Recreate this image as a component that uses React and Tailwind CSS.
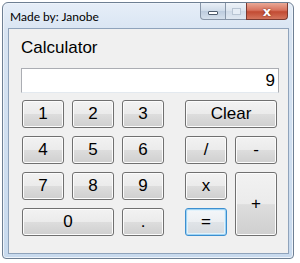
import React from "react";

const btn =
  "flex items-center justify-center rounded-[3px] border border-[#707070] bg-[linear-gradient(#f2f2f2_0%,#ebebeb_50%,#dddddd_51%,#cfcfcf_100%)] text-[17px] text-black shadow-[inset_0_0_0_1px_#fcfcfc]";

function Btn({ children, className = "" }) {
  return <div className={`${btn} ${className}`}>{children}</div>;
}

export default function App() {
  return (
    <div className="w-[300px] h-[263px] bg-white pt-[2px] pl-[2px] font-['Liberation_Sans',Arial,sans-serif]">
      <div className="w-[292px] h-[257px] rounded-t-[6px] rounded-b-[4px] border border-[#6e7f93] bg-[linear-gradient(#e6eef8,#d8e4f2_30px,#c8daee)] flex flex-col shadow-[inset_0_0_0_1px_#eef4fb]">
        <div className="h-[25px] shrink-0 flex items-start justify-between pl-[7px] pr-[5px]">
          <div className="pt-[7px] text-[12px] leading-[14px] text-black font-['Lato',sans-serif]">
            Made by: Janobe
          </div>
          <div className="flex h-[17px]">
            <div className="w-[26px] h-[17px] rounded-bl-[4px] border border-t-0 border-[#8896a8] bg-[linear-gradient(#e9eff7,#cfdbe9_50%,#bccbdd_51%,#d5e0ec)] flex items-center justify-center">
              <div className="w-[10px] h-[4px] mt-[3px] bg-white border border-[#4d5b6c] rounded-[1px]" />
            </div>
            <div className="w-[20px] h-[17px] border-b border-[#8896a8] bg-[linear-gradient(#eef3f9,#dbe4ee_50%,#cfdae7_51%,#e0e8f1)] flex items-center justify-center">
              <div className="w-[9px] h-[7px] border border-[#b9c5d3] bg-[#e6edf5]" />
            </div>
            <div className="w-[42px] h-[17px] rounded-br-[4px] border border-t-0 border-[#7a3a30] bg-[linear-gradient(#e9a996,#d7735e_45%,#c24b33_55%,#d4755d)] flex items-center justify-center">
              <span className="text-white font-bold text-[13px] leading-none font-['DejaVu_Sans',sans-serif] [text-shadow:0_0_2px_#6a2010]">x</span>
            </div>
          </div>
        </div>
        <div className="ml-[5px] mr-[4px] mb-[4px] flex-1 border border-[#8fa3bb] bg-[#f0f0f0] pl-[12px] pr-[8px]">
          <div className="mt-[9px] text-[17px] leading-[20px] text-black">Calculator</div>
          <div className="mt-[10px] h-[25px] w-[258px] border border-[#abadb3] border-b-[#e3e9ef] bg-white flex items-center justify-end pr-[3px] text-[17px] text-black">
            9
          </div>
          <div className="mt-[7px] ml-[1px] flex gap-[21px]">
            <div className="grid grid-cols-[42px_42px_42px] grid-rows-[28px_28px_28px_28px] gap-x-[8px] gap-y-[8px]">
              <Btn>1</Btn>
              <Btn>2</Btn>
              <Btn>3</Btn>
              <Btn>4</Btn>
              <Btn>5</Btn>
              <Btn>6</Btn>
              <Btn>7</Btn>
              <Btn>8</Btn>
              <Btn>9</Btn>
              <Btn className="col-span-2">0</Btn>
              <Btn>.</Btn>
            </div>
            <div className="grid grid-cols-[42px_42px] grid-rows-[28px_28px_28px_28px] gap-x-[8px] gap-y-[8px]">
              <Btn className="col-span-2">Clear</Btn>
              <Btn>/</Btn>
              <Btn>-</Btn>
              <Btn>x</Btn>
              <Btn className="row-span-2">+</Btn>
              <div className="flex items-center justify-center rounded-[3px] border border-[#3c8fd0] bg-[linear-gradient(#f4f7fa_0%,#eceff2_50%,#e0e4e8_51%,#d6dade_100%)] shadow-[inset_0_0_0_1px_#9fd3f3,inset_0_0_0_2px_#e2f2fb] text-[17px] text-black">
                =
              </div>
            </div>
          </div>
        </div>
      </div>
    </div>
  );
}
